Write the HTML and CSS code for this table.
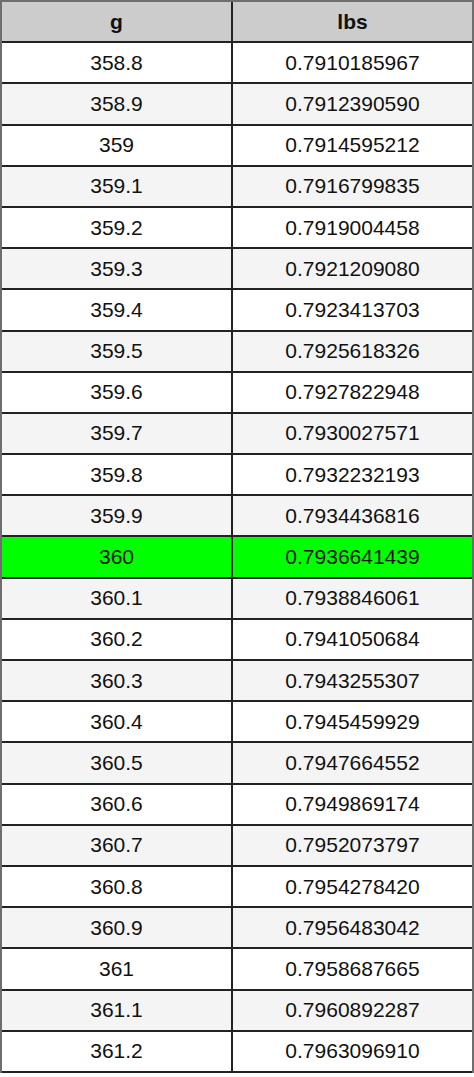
FILE: index.html
```html
<!DOCTYPE html>
<html>
<head>
<meta charset="utf-8">
<link rel="stylesheet" href="styles.css">
</head>
<body>
<div class="table">
  <div class="row head"><div class="cell c1">g</div><div class="cell c2">lbs</div></div>
  <div class="row"><div class="cell c1">358.8</div><div class="cell c2">0.7910185967</div></div>
  <div class="row alt"><div class="cell c1">358.9</div><div class="cell c2">0.7912390590</div></div>
  <div class="row"><div class="cell c1">359</div><div class="cell c2">0.7914595212</div></div>
  <div class="row alt"><div class="cell c1">359.1</div><div class="cell c2">0.7916799835</div></div>
  <div class="row"><div class="cell c1">359.2</div><div class="cell c2">0.7919004458</div></div>
  <div class="row alt"><div class="cell c1">359.3</div><div class="cell c2">0.7921209080</div></div>
  <div class="row"><div class="cell c1">359.4</div><div class="cell c2">0.7923413703</div></div>
  <div class="row alt"><div class="cell c1">359.5</div><div class="cell c2">0.7925618326</div></div>
  <div class="row"><div class="cell c1">359.6</div><div class="cell c2">0.7927822948</div></div>
  <div class="row alt"><div class="cell c1">359.7</div><div class="cell c2">0.7930027571</div></div>
  <div class="row"><div class="cell c1">359.8</div><div class="cell c2">0.7932232193</div></div>
  <div class="row alt"><div class="cell c1">359.9</div><div class="cell c2">0.7934436816</div></div>
  <div class="row hl"><div class="cell c1">360</div><div class="cell c2">0.7936641439</div></div>
  <div class="row alt"><div class="cell c1">360.1</div><div class="cell c2">0.7938846061</div></div>
  <div class="row"><div class="cell c1">360.2</div><div class="cell c2">0.7941050684</div></div>
  <div class="row alt"><div class="cell c1">360.3</div><div class="cell c2">0.7943255307</div></div>
  <div class="row"><div class="cell c1">360.4</div><div class="cell c2">0.7945459929</div></div>
  <div class="row alt"><div class="cell c1">360.5</div><div class="cell c2">0.7947664552</div></div>
  <div class="row"><div class="cell c1">360.6</div><div class="cell c2">0.7949869174</div></div>
  <div class="row alt"><div class="cell c1">360.7</div><div class="cell c2">0.7952073797</div></div>
  <div class="row"><div class="cell c1">360.8</div><div class="cell c2">0.7954278420</div></div>
  <div class="row alt"><div class="cell c1">360.9</div><div class="cell c2">0.7956483042</div></div>
  <div class="row"><div class="cell c1">361</div><div class="cell c2">0.7958687665</div></div>
  <div class="row alt"><div class="cell c1">361.1</div><div class="cell c2">0.7960892287</div></div>
  <div class="row"><div class="cell c1">361.2</div><div class="cell c2">0.7963096910</div></div>
</div>
</body>
</html>
```
FILE: styles.css
```css
html, body {
  margin: 0;
  padding: 0;
  background: #ffffff;
}
.table {
  width: 474px;
  box-sizing: border-box;
  border-top: 2px solid #6e6e6e;
  border-left: 2px solid #6e6e6e;
  border-right: 2px solid #6e6e6e;
  font-family: "Liberation Sans", Arial, sans-serif;
  font-size: 21px;
  color: #111;
}
.row {
  display: grid;
  grid-template-columns: 231px 1fr;
  height: 41.2px;
  box-sizing: border-box;
  border-bottom: 2px solid #222;
  background: #ffffff;
}
.row.alt { background: #f4f4f4; }
.row.head { background: #cccccc; font-weight: bold; }
.row.hl { background: #00ff00; }
.cell {
  display: flex;
  align-items: center;
  justify-content: center;
  box-sizing: border-box;
}
.c1 { border-right: 2px solid #222; }
```
